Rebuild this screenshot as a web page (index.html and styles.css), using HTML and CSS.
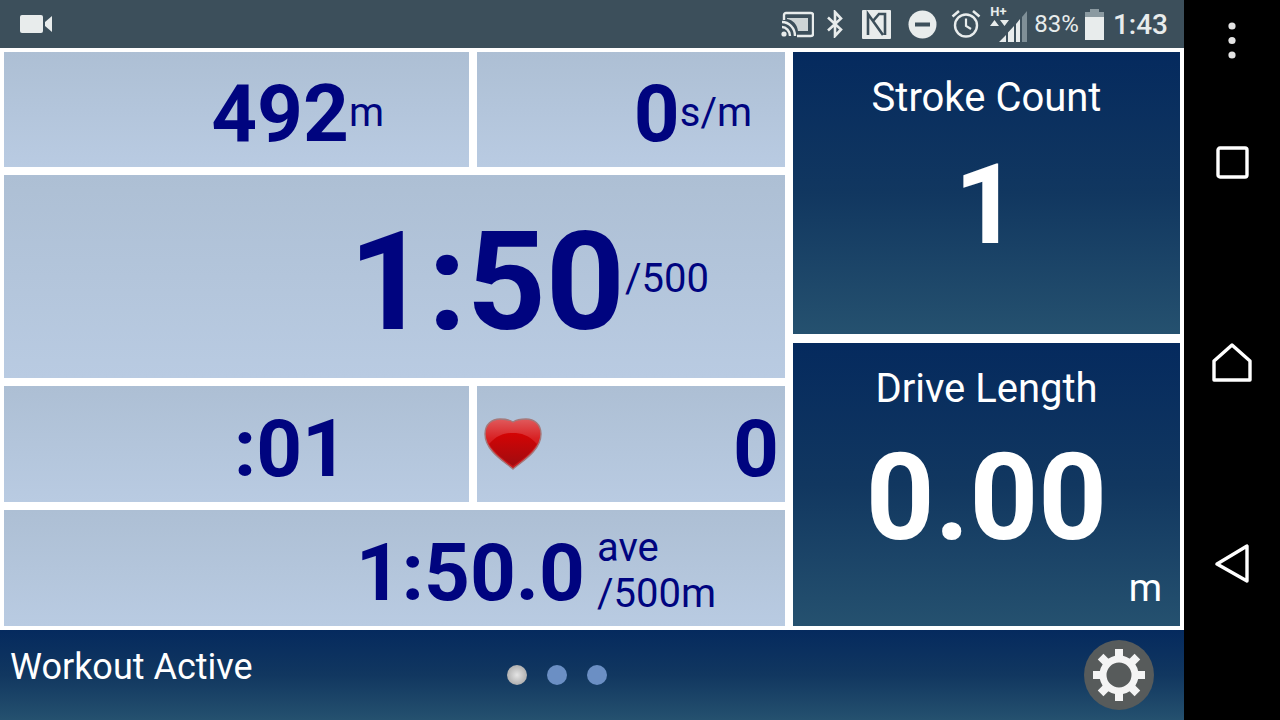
FILE: index.html
```html
<!DOCTYPE html>
<html lang="en">
<head>
  <meta charset="UTF-8" />
  <title>Workout Active</title>
  <link rel="stylesheet" href="styles.css">
</head>
<body>
  <div class="screen">
    <div class="app">
      <div class="statusbar">
        <svg class="video-icon" width="34" height="20" viewBox="0 0 34 20">
          <rect x="0" y="1" width="23" height="18" rx="2" fill="#e8ecec"/>
          <path d="M32 2 L32 18 L25 12 L25 8 Z" fill="#e8ecec"/>
        </svg>
        <div class="status-right">
          <svg width="33" height="27" viewBox="0 0 33 27">
            <path d="M3 9 V4 a2 2 0 0 1 2-2 H30 a2 2 0 0 1 2 2 V23 a2 2 0 0 1-2 2 H16" fill="none" stroke="#e8ecec" stroke-width="2.4"/>
            <path d="M6 7 H27 V20 H17 C16 13 12 9 6 8 Z" fill="#e8ecec" opacity=".85"/>
            <path d="M1 11 C8 11 14 17 14 25 M1 16 C5 16 9 20 9 25" fill="none" stroke="#e8ecec" stroke-width="2.4"/>
            <circle cx="3" cy="23" r="2.6" fill="#e8ecec"/>
          </svg>
          <svg class="bt" width="18" height="28" viewBox="0 0 18 28">
            <path d="M2 7.5 L15 19.5 L9 26 V2 L15 8.5 L2 20.5" fill="none" stroke="#e8ecec" stroke-width="2.6"/>
          </svg>
          <svg class="nfc" width="31" height="31" viewBox="0 0 31 31">
            <path d="M2 1 H29 a1 1 0 0 1 1 1 V29 a1 1 0 0 1-1 1 H2 a1 1 0 0 1-1-1 V2 a1 1 0 0 1 1-1 Z" fill="#e8ecec"/>
            <path d="M7 26 V5 L22 26 M24 26 V5 H18 L12 12" fill="none" stroke="#3c4f5b" stroke-width="2.6"/>
          </svg>
          <svg class="dnd" width="29" height="29" viewBox="0 0 29 29">
            <circle cx="14.5" cy="14.5" r="14" fill="#e8ecec"/>
            <rect x="7" y="12.5" width="15" height="4" fill="#3c4f5b"/>
          </svg>
          <svg class="alarm" width="30" height="30" viewBox="0 0 30 30">
            <circle cx="15" cy="16.5" r="11" fill="none" stroke="#e8ecec" stroke-width="2.4"/>
            <path d="M15 9.5 V17 L20 20" fill="none" stroke="#e8ecec" stroke-width="2.2"/>
            <path d="M1.5 7.5 L8 2 M28.5 7.5 L22 2" fill="none" stroke="#e8ecec" stroke-width="2.6"/>
          </svg>
          <div class="signal">
            <span class="net">H+</span>
            <svg width="38" height="34" viewBox="0 0 38 34">
              <path d="M0 17 L4.5 11 L9 17 Z M10 11 H19 L14.5 17 Z" fill="#e8ecec"/>
              <path d="M9 33 L16 26 V33 Z M18 33 V23.5 L24 17 V33 Z" fill="#e8ecec"/>
              <path d="M26 33 V15 L30 10 V33 Z" fill="#e8ecec"/>
              <path d="M32 33 V8 L37 2 V33 Z" fill="#7f8f97"/>
            </svg>
          </div>
          <span class="batt-text">83%</span>
          <svg class="batt" width="19" height="31" viewBox="0 0 19 31">
            <path d="M5 0 H14 V3 H19 V8 H0 V3 H5 Z" fill="#8b9aa1"/>
            <rect x="0" y="8" width="19" height="23" fill="#e8ecec"/>
          </svg>
          <span class="clock">1:43</span>
        </div>
      </div>

      <div class="board">
        <div class="left-col">
          <div class="row row-first">
            <div class="cell cell-wide pad-dist"><span class="num">492</span><span class="unit">m</span></div>
            <div class="cell cell-narrow pad-rate"><span class="num">0</span><span class="unit">s/m</span></div>
          </div>
          <div class="cell row-big pad-split"><span class="num-big">1:50</span><span class="unit unit-split">/500</span></div>
          <div class="row row-small">
            <div class="cell cell-wide pad-time"><span class="num num-mid">:01</span></div>
            <div class="cell cell-narrow pad-heart">
              <svg class="heart" width="60" height="54" viewBox="0 0 60 54">
                <defs>
                  <linearGradient id="heartBase" x1="0" y1="0" x2="0" y2="1">
                    <stop offset="0" stop-color="#e05a5c"/>
                    <stop offset=".4" stop-color="#d82022"/>
                    <stop offset="1" stop-color="#c8161a"/>
                  </linearGradient>
                  <linearGradient id="heartLow" x1="0" y1="0" x2="0" y2="1">
                    <stop offset="0" stop-color="#d40404"/>
                    <stop offset="1" stop-color="#a00c10"/>
                  </linearGradient>
                </defs>
                <path d="M30 52 C22 45 2 34 2 17 C2 7 9 2 17 2 C23 2 27 3 30 5 C33 3 37 2 43 2 C51 2 58 7 58 17 C58 34 38 45 30 52 Z" fill="url(#heartBase)" stroke="#a4797b" stroke-width="1.4"/>
                <path d="M6 27 C14 18 22 16 30 16 C38 16 46 18 54 27 C48 37 37 44 30 49 C23 44 12 37 6 27 Z" fill="url(#heartLow)"/>
              </svg>
              <span class="num">0</span>
            </div>
          </div>
          <div class="cell row-small pad-ave">
            <span class="num num-ave">1:50.0</span>
            <span class="unit-stack"><span>ave</span><span>/500m</span></span>
          </div>
        </div>

        <div class="right-col">
          <div class="panel panel-top">
            <div class="panel-title">Stroke Count</div>
            <div class="panel-value value-count">1</div>
          </div>
          <div class="panel panel-bottom">
            <div class="panel-title">Drive Length</div>
            <div class="panel-value value-drive">0.00</div>
            <div class="panel-unit">m</div>
          </div>
        </div>
      </div>

      <div class="footer">
        <span class="footer-title">Workout Active</span>
        <div class="dots">
          <span class="dot dot-on"></span>
          <span class="dot"></span>
          <span class="dot"></span>
        </div>
        <div class="gear">
          <svg width="54" height="54" viewBox="0 0 54 54">
            <g fill="#f4f4f4">
              <rect x="23" y="1" width="8" height="52"/>
              <rect x="23" y="1" width="8" height="52" transform="rotate(45 27 27)"/>
              <rect x="23" y="1" width="8" height="52" transform="rotate(90 27 27)"/>
              <rect x="23" y="1" width="8" height="52" transform="rotate(135 27 27)"/>
            </g>
            <circle cx="27" cy="27" r="16" fill="#575b5b" stroke="#f4f4f4" stroke-width="7"/>
          </svg>
        </div>
      </div>
    </div>

    <div class="navbar">
      <svg width="10" height="38" viewBox="0 0 10 38">
        <circle cx="5" cy="5" r="3.6" fill="#e4e4e4"/>
        <circle cx="5" cy="19.5" r="3.6" fill="#e4e4e4"/>
        <circle cx="5" cy="34" r="3.6" fill="#e4e4e4"/>
      </svg>
      <svg width="34" height="34" viewBox="0 0 34 34">
        <rect x="2" y="2" width="29" height="29" rx="2" fill="none" stroke="#fff" stroke-width="3.4"/>
      </svg>
      <svg width="40" height="40" viewBox="0 0 40 40">
        <path d="M20 2 L38 18 V37 H2 V18 Z" fill="none" stroke="#fff" stroke-width="3.4" stroke-linejoin="round"/>
      </svg>
      <svg width="36" height="40" viewBox="0 0 36 40">
        <path d="M32 2 V37 L2 20 Z" fill="none" stroke="#fff" stroke-width="3.4" stroke-linejoin="round"/>
      </svg>
    </div>
  </div>
</body>
</html>
```

FILE: styles.css
```css
* {
  box-sizing: border-box;
}
body {
  margin: 0;
  background-color: #000;
  font-family: Roboto, "Liberation Sans", sans-serif;
}
.screen {
  display: flex;
  width: 1280px;
  height: 720px;
  overflow: hidden;
}
.app {
  width: 1184px;
  display: flex;
  flex-direction: column;
}

/* status bar */
.statusbar {
  height: 48px;
  background-color: #3c4f5b;
  display: flex;
  align-items: center;
  justify-content: space-between;
  padding: 0 16px 0 20px;
  color: #e8ecec;
}
.status-right {
  display: flex;
  align-items: center;
}
.bt {
  margin-left: 12px;
}
.nfc {
  margin-left: 17px;
}
.dnd {
  margin-left: 16px;
}
.alarm {
  margin-left: 14px;
}
.signal {
  position: relative;
  width: 38px;
  height: 38px;
  margin-left: 9px;
  padding-top: 4px;
}
.net {
  position: absolute;
  left: 0;
  top: 0;
  font-size: 13px;
  font-weight: 700;
  line-height: 14px;
}
.batt-text {
  font-size: 24px;
  margin-left: 6px;
}
.batt {
  margin-left: 6px;
}
.clock {
  font-size: 28px;
  font-weight: 500;
  margin-left: 9px;
}

/* tiles */
.board {
  height: 582px;
  background-color: #fff;
  padding: 4px;
  display: flex;
  gap: 8px;
}
.left-col {
  width: 781px;
  display: flex;
  flex-direction: column;
  gap: 8px;
}
.row {
  display: flex;
  gap: 8px;
}
.row-first {
  height: 115px;
}
.row-small {
  height: 116px;
}
.row-big {
  height: 203px;
}
.cell {
  background: linear-gradient(#adbfd4, #b9cbe2);
  color: #00047f;
  display: flex;
  align-items: center;
  justify-content: flex-end;
}
.cell-wide {
  width: 465px;
}
.cell-narrow {
  width: 308px;
}
.num {
  font-size: 80px;
  font-weight: 700;
  line-height: 1;
  padding-top: 9px;
}
.num-big {
  font-size: 138px;
  font-weight: 700;
  line-height: 1;
  padding-top: 10px;
}
.unit {
  font-size: 40px;
  padding-top: 6px;
}
.unit-split {
  padding-top: 3px;
}
.unit-stack {
  display: flex;
  flex-direction: column;
  font-size: 40px;
  line-height: 46px;
  margin-left: 12px;
  padding-top: 5px;
}
.pad-dist {
  padding-right: 85px;
}
.pad-rate {
  padding-right: 33px;
}
.pad-split {
  padding-right: 76px;
}
.pad-time {
  padding-right: 121px;
}
.pad-heart {
  justify-content: space-between;
  padding: 0 6px 0 6px;
}
.pad-ave {
  padding-right: 69px;
}

/* right panels */
.right-col {
  width: 387px;
  display: flex;
  flex-direction: column;
  gap: 9px;
}
.panel {
  position: relative;
  color: #fff;
  background: linear-gradient(#052a5e, #113760 50%, #25516f);
  text-align: center;
}
.panel-top {
  height: 282px;
}
.panel-bottom {
  height: 283px;
}
.panel-title {
  font-size: 40px;
  line-height: 48px;
  padding-top: 22px;
}
.panel-value {
  font-weight: 700;
  line-height: 1;
}
.value-count {
  font-size: 112px;
  margin-top: 27px;
}
.value-drive {
  font-size: 120px;
  margin-top: 25px;
}
.panel-unit {
  position: absolute;
  right: 18px;
  bottom: 16px;
  font-size: 38px;
}

/* bottom bar */
.footer {
  flex: 1;
  position: relative;
  background: linear-gradient(#052a5e, #113760 50%, #25516f);
  color: #fff;
  display: flex;
  align-items: center;
  padding-left: 10px;
}
.footer-title {
  font-size: 36px;
  margin-bottom: 16px;
}
.dots {
  position: absolute;
  left: 507px;
  top: 35px;
  display: flex;
  gap: 20px;
}
.dot {
  width: 20px;
  height: 20px;
  border-radius: 50%;
  background-color: #6b8fc4;
}
.dot-on {
  background: radial-gradient(#e4e4e4, #9b9b9b);
}
.gear {
  position: absolute;
  left: 1084px;
  top: 10px;
  width: 70px;
  height: 70px;
  border-radius: 50%;
  background-color: #575b5b;
  display: flex;
  align-items: center;
  justify-content: center;
}

/* android nav */
.navbar {
  width: 96px;
  background-color: #000;
  position: relative;
}
.navbar svg {
  position: absolute;
}
.navbar svg:nth-child(1) {
  left: 43px;
  top: 21px;
}
.navbar svg:nth-child(2) {
  left: 32px;
  top: 146px;
}
.navbar svg:nth-child(3) {
  left: 28px;
  top: 343px;
}
.navbar svg:nth-child(4) {
  left: 31px;
  top: 544px;
}
```
